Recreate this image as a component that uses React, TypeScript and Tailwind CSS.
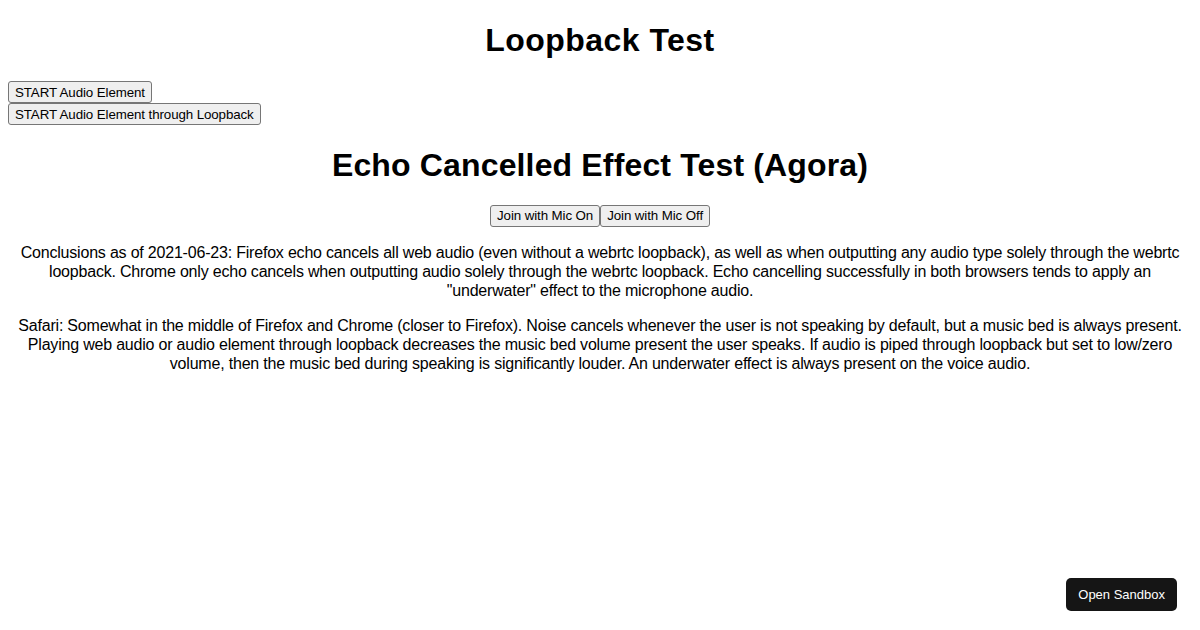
const btn =
  'h-[22px] bg-[#efefef] border border-[#767676] rounded-[3px] px-[6px] text-[13.333px] leading-[normal] text-black tracking-[-0.1px]'

export default function App() {
  return (
    <div className="min-h-[630px] bg-white text-black font-['Liberation_Sans',Arial,sans-serif]">
      <div className="m-2">
        <h1 className="mt-[22px] mb-[22px] text-center text-[32px] font-bold leading-[normal] tracking-[0.45px]">
          Loopback Test
        </h1>
        <div className="flex flex-col items-start">
          <button className={btn}>START Audio Element</button>
          <button className={btn}>START Audio Element through Loopback</button>
        </div>
        <h1 className="mt-[21.5px] mb-[21px] text-center text-[32px] font-bold leading-[normal] tracking-[0.15px]">
          Echo Cancelled Effect Test (Agora)
        </h1>
        <div className="flex justify-center">
          <button className={btn}>Join with Mic On</button>
          <button className={btn}>Join with Mic Off</button>
        </div>
        <p className="my-4 text-center text-base leading-[19px] tracking-[-0.2px]">
          Conclusions as of 2021-06-23: Firefox echo cancels all web audio (even without a webrtc loopback), as well as
          when outputting any audio type solely through the webrtc loopback. Chrome only echo cancels when outputting
          audio solely through the webrtc loopback. Echo cancelling successfully in both browsers tends to apply an
          "underwater" effect to the microphone audio.
        </p>
        <p className="my-4 text-center text-base leading-[19px] tracking-[-0.2px]">
          Safari: Somewhat in the middle of Firefox and Chrome (closer to Firefox). Noise cancels whenever the user is
          not speaking by default, but a music bed is always present. Playing web audio or audio element through
          loopback decreases the music bed volume present the user speaks. If audio is piped through loopback but set
          to low/zero volume, then the music bed during speaking is significantly louder. An underwater effect is
          always present on the voice audio.
        </p>
      </div>
      <button className="fixed right-[23px] bottom-[19px] h-[33px] px-[12px] rounded-[5px] bg-[#151515] text-[13px] text-white font-['Liberation_Sans',Arial,sans-serif]">
        Open Sandbox
      </button>
    </div>
  )
}
